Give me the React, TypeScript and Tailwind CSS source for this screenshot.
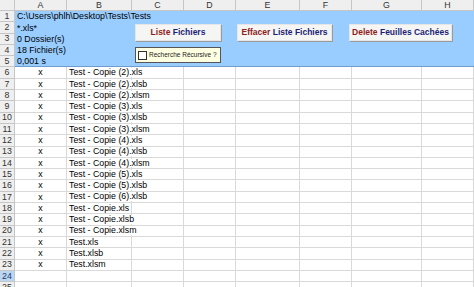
import React from 'react';

const cols = [
  { name: 'A', w: 'w-[52px]' },
  { name: 'B', w: 'w-[65px]' },
  { name: 'C', w: 'w-[52px]' },
  { name: 'D', w: 'w-[52px]' },
  { name: 'E', w: 'w-[64px]' },
  { name: 'F', w: 'w-[52px]' },
  { name: 'G', w: 'w-[70px]' },
  { name: 'H', w: 'w-[52px]' },
];

const infos = [
  'C:\\Users\\phlh\\Desktop\\Tests\\Tests',
  '*.xls*',
  '0 Dossier(s)',
  '18 Fichier(s)',
  '0,001 s',
];

const files = [
  'Test - Copie (2).xls',
  'Test - Copie (2).xlsb',
  'Test - Copie (2).xlsm',
  'Test - Copie (3).xls',
  'Test - Copie (3).xlsb',
  'Test - Copie (3).xlsm',
  'Test - Copie (4).xls',
  'Test - Copie (4).xlsb',
  'Test - Copie (4).xlsm',
  'Test - Copie (5).xls',
  'Test - Copie (5).xlsb',
  'Test - Copie (6).xlsb',
  'Test - Copie.xls',
  'Test - Copie.xlsb',
  'Test - Copie.xlsm',
  'Test.xls',
  'Test.xlsb',
  'Test.xlsm',
];

function RowHead({ n, active }: { n: number; active?: boolean }) {
  return (
    <div
      className={
        'w-[15px] shrink-0 flex items-center justify-center border-r border-b border-[#c6c6c6] ' +
        (active ? 'bg-[#bcd6f2] text-[#1d3f73]' : 'bg-[#efefef] text-[#333]')
      }
    >
      {n}
    </div>
  );
}

function ActionButton({ red, blue, className }: { red: string; blue: string; className: string }) {
  return (
    <div
      className={
        'absolute h-[17px] flex items-center justify-center bg-[#f5f5f3] border border-[#e6e6e6] shadow-[1px_1px_0_#9a9a9a] font-bold text-[8.5px] ' +
        className
      }
    >
      <span className="text-[#8e1c1c]">{red}</span>
      <span className="text-[#1c1f78]">&nbsp;{blue}</span>
    </div>
  );
}

export default function App() {
  return (
    <div
      className="relative w-[474px] h-[287px] overflow-hidden bg-white text-[8.8px] leading-none text-black"
      style={{ fontFamily: '"Liberation Sans", Arial, sans-serif' }}
    >
      {/* column headers */}
      <div className="flex h-[11px]">
        <div className="w-[15px] shrink-0 bg-[#efefef] border-r border-b border-[#c6c6c6]" />
        {cols.map((c) => (
          <div
            key={c.name}
            className={c.w + ' shrink-0 flex items-center justify-center bg-[#efefef] border-r border-b border-[#c6c6c6] text-[#333]'}
          >
            {c.name}
          </div>
        ))}
      </div>

      {/* info block */}
      {infos.map((t, i) => (
        <div key={i} className="flex h-[11.3px]">
          <RowHead n={i + 1} />
          <div
            className={
              'flex-1 flex items-center pl-[2px] bg-[#99ccff] whitespace-nowrap ' +
              (i === 4 ? 'border-b border-[#6f9ccc]' : '')
            }
          >
            {t}
          </div>
        </div>
      ))}

      {/* file list */}
      {Array.from({ length: 20 }).map((_, i) => {
        const n = i + 6;
        const file = files[i];
        return (
          <div key={n} className="flex h-[11.3px]">
            <RowHead n={n} active={n === 24} />
            {cols.map((c, j) => (
              <div
                key={c.name}
                className={c.w + ' shrink-0 relative flex items-center border-r border-b border-[#d9d9d9]'}
              >
                {j === 0 && file && <span className="w-full text-center">x</span>}
                {j === 1 && file && (
                  <span className="absolute left-[2px] z-10 whitespace-nowrap bg-white pr-[1px]">{file}</span>
                )}
              </div>
            ))}
          </div>
        );
      })}

      {/* floating controls */}
      <ActionButton red="Liste" blue="Fichiers" className="left-[135px] top-[24px] w-[86px]" />
      <ActionButton red="Effacer" blue="Liste Fichiers" className="left-[237px] top-[24px] w-[95px]" />
      <ActionButton red="Delete" blue="Feuilles Cachées" className="left-[349px] top-[24px] w-[103px]" />

      <div className="absolute left-[135px] top-[47px] w-[86px] h-[16px] flex items-center gap-[2px] pl-[2px] bg-[#ffffe1] border border-[#555]">
        <div className="w-[9px] h-[9px] border border-[#333] bg-white shrink-0" />
        <span className="text-[6.5px] text-[#222] whitespace-nowrap">Recherche Récursive ?</span>
      </div>
    </div>
  );
}
